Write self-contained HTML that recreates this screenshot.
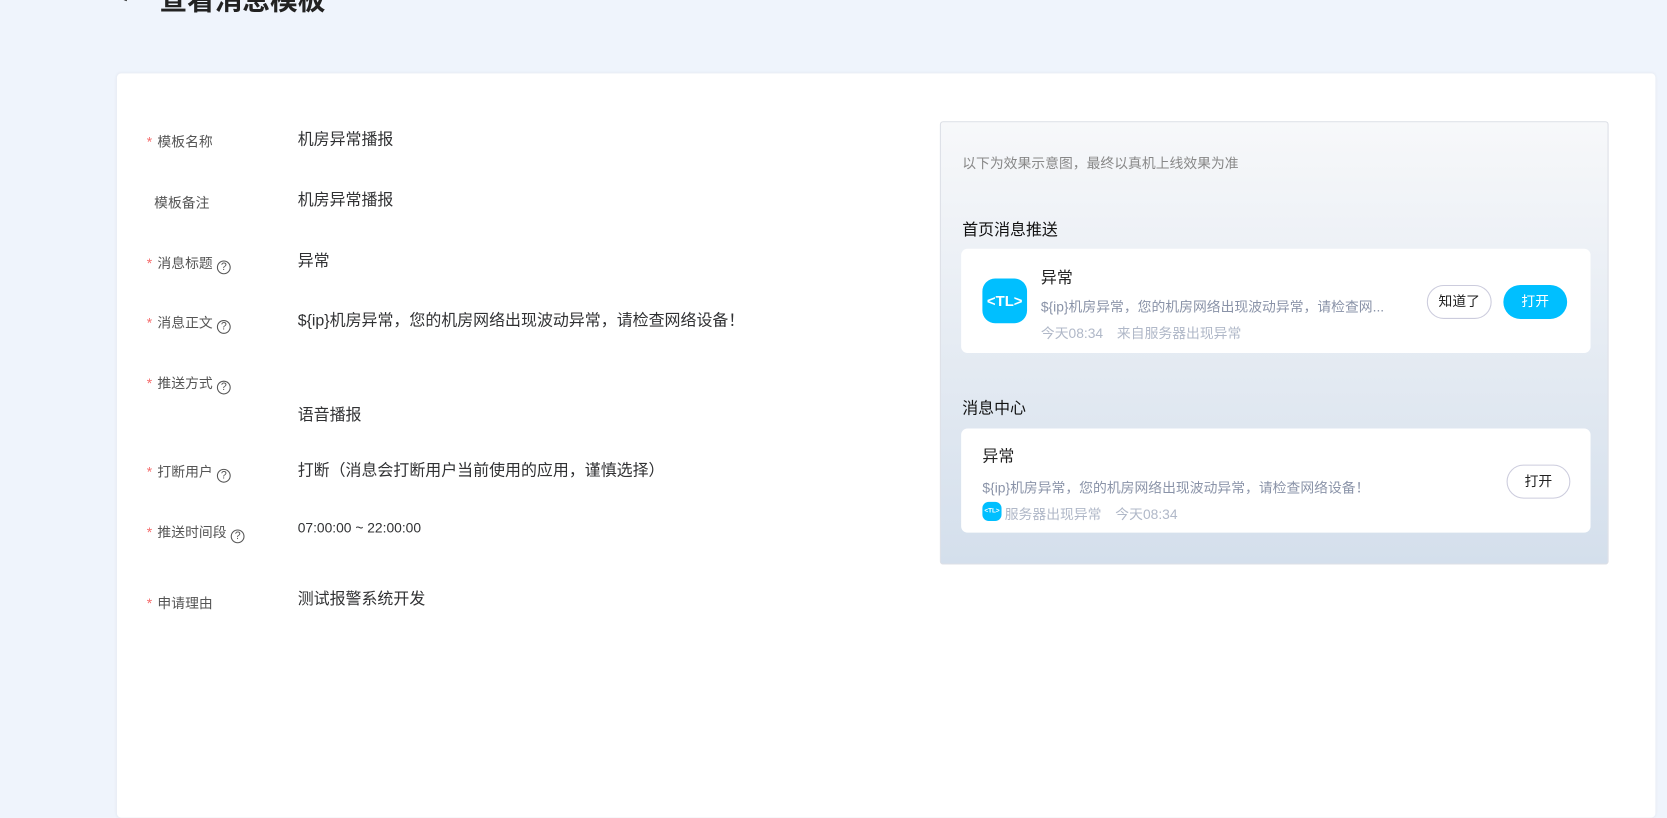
<!DOCTYPE html>
<html><head><meta charset="utf-8"><style>
*{margin:0;padding:0;box-sizing:border-box}
html,body{width:1667px;height:718px;overflow:hidden;background:#eff4fc}
body{font-family:"Liberation Sans","Noto Sans CJK SC",sans-serif;color:#303133}
#w{position:absolute;left:0;top:0;width:1568px;height:676px;transform:scale(1.0632);transform-origin:0 0}
.a{position:absolute;white-space:nowrap}
.card{position:absolute;left:110px;top:69px;width:1447px;height:700px;background:#fff;border-radius:4px;box-shadow:0 0 3px rgba(0,0,0,.06)}
.lb{font-size:13px;color:#555;left:138px}
.lb i{color:#f56c6c;font-style:normal;margin-right:5px}
.q{display:inline-block;width:13px;height:13px;border:1px solid #555;border-radius:50%;font-size:10px;line-height:11px;text-align:center;margin-left:4px;vertical-align:-2px;font-style:normal;color:#555}
.v{font-size:15px;left:280px;color:#303133}
.panel{position:absolute;left:884px;top:114px;width:629px;height:417px;border:1px solid #dcdfe6;border-radius:3px;background:linear-gradient(#f7f8fa,#d4dfec)}
.box{position:absolute;background:#fff;border-radius:6px}
.logo{background:#00bfff;color:#fff;font-weight:bold;text-align:center}
.btn{position:absolute;border-radius:16px;font-size:13px;text-align:center}
</style></head><body><div id="w">
<div class="a" style="left:104px;top:-22px;font-size:28px;font-weight:bold;color:#222">&lt;</div>
<div class="a" style="left:150px;top:-20px;font-size:26px;font-weight:bold;color:#222">查看消息模板</div>
<div class="card"></div>
<div class="a lb" style="top:123px"><i>*</i>模板名称</div>
<div class="a v" style="top:120px">机房异常播报</div>
<div class="a lb" style="top:180px;left:145px">模板备注</div>
<div class="a v" style="top:177px">机房异常播报</div>
<div class="a lb" style="top:237px"><i>*</i>消息标题<span class="q">?</span></div>
<div class="a v" style="top:234px">异常</div>
<div class="a lb" style="top:293px"><i>*</i>消息正文<span class="q">?</span></div>
<div class="a v" style="top:290px">${ip}机房异常，您的机房网络出现波动异常，请检查网络设备！</div>
<div class="a lb" style="top:350px"><i>*</i>推送方式<span class="q">?</span></div>
<div class="a v" style="top:379px">语音播报</div>
<div class="a lb" style="top:433px"><i>*</i>打断用户<span class="q">?</span></div>
<div class="a v" style="top:431px">打断（消息会打断用户当前使用的应用，谨慎选择）</div>
<div class="a lb" style="top:490px"><i>*</i>推送时间段<span class="q">?</span></div>
<div class="a" style="left:280px;top:489px;font-size:13px">07:00:00 ~ 22:00:00</div>
<div class="a lb" style="top:557px"><i>*</i>申请理由</div>
<div class="a v" style="top:552px">测试报警系统开发</div>

<div class="panel"></div>
<div class="a" style="left:905px;top:143px;font-size:13px;color:#888">以下为效果示意图，最终以真机上线效果为准</div>
<div class="a" style="left:905px;top:205px;font-size:15px;color:#111">首页消息推送</div>
<div class="box" style="left:904px;top:234px;width:592px;height:98px"></div>
<div class="a logo" style="left:924px;top:262px;width:42px;height:42px;border-radius:12px;font-size:14px;line-height:42px">&lt;TL&gt;</div>
<div class="a" style="left:979px;top:250px;font-size:15px;color:#222">异常</div>
<div class="a" style="left:979px;top:278px;font-size:13px;color:#8a93a8">${ip}机房异常，您的机房网络出现波动异常，请检查网...</div>
<div class="a" style="left:979px;top:303px;font-size:13px;color:#b0b8c8">今天08:34　来自服务器出现异常</div>
<div class="btn" style="left:1342px;top:268px;width:61px;height:32px;border:1px solid #ccd;line-height:30px;color:#222">知道了</div>
<div class="btn" style="left:1414px;top:268px;width:60px;height:32px;background:#00bfff;color:#fff;line-height:32px">打开</div>
<div class="a" style="left:905px;top:373px;font-size:15px;color:#111">消息中心</div>
<div class="box" style="left:904px;top:403px;width:592px;height:98px"></div>
<div class="a" style="left:924px;top:418px;font-size:15px;color:#222">异常</div>
<div class="a" style="left:924px;top:448px;font-size:13px;color:#8a93a8">${ip}机房异常，您的机房网络出现波动异常，请检查网络设备！</div>
<div class="a logo" style="left:924px;top:472px;width:18px;height:18px;border-radius:6px;font-size:6px;line-height:18px">&lt;TL&gt;</div>
<div class="a" style="left:945px;top:473px;font-size:13px;color:#b0b8c8">服务器出现异常　今天08:34</div>
<div class="btn" style="left:1417px;top:437px;width:60px;height:32px;border:1px solid #ccd;line-height:30px;color:#222">打开</div>
</div></body></html>
